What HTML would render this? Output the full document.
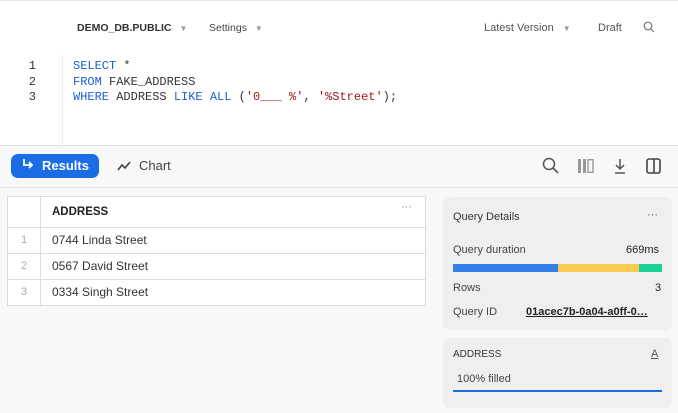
<!DOCTYPE html>
<html><head><style>
*{box-sizing:border-box;margin:0;padding:0}
body{width:678px;height:413px;overflow:hidden;background:#f8f8f8;font-family:"Liberation Sans",sans-serif;color:#1e1e1e;position:relative}
.a{position:absolute}
.top{left:0;top:0;width:678px;height:146px;background:#fff;border-top:1px solid #e8e8e8;border-bottom:1px solid #e2e2e2}
.t{font-size:11px;color:#444}
.code{font-family:"Liberation Mono",monospace;font-size:12px;line-height:15.7px;white-space:pre}
.kw{color:#1a5fd6}.st{color:#a31515}
.ln{color:#333;text-align:right;width:30px;left:6px}
.bar{left:0;top:146px;width:678px;height:42px;background:#f8f8f8;border-bottom:1px solid #e6e6e6}
.btn{left:11px;top:154px;width:88px;height:24px;background:#1a6ce7;border-radius:7px;color:#fff;font-size:13px;font-weight:bold;line-height:24px;padding-left:31px}
.tbl{left:7px;top:196px;width:419px;height:110px;background:#fff;border:1px solid #ddd}
.row{position:absolute;left:0;width:417px;height:26px;border-top:1px solid #ddd;font-size:12px;line-height:25px}
.row .n{position:absolute;left:0;width:32px;text-align:center;color:#aaa;font-size:11px}
.row .v{position:absolute;left:44px;color:#333}
.vl{position:absolute;left:32px;top:0;width:1px;height:108px;background:#ddd}
.card{background:#efefef;border-radius:7px}
.s{font-size:11px;color:#444}
</style></head><body>
<div class="a top"></div>
<div class="a t" style="left:77px;top:22px;font-weight:bold;color:#333;font-size:10.5px">DEMO_DB.PUBLIC <span style="color:#999;font-size:8px;margin-left:5px">▼</span></div>
<div class="a t" style="left:209px;top:22px;font-size:10.5px">Settings <span style="color:#999;font-size:8px;margin-left:5px">▼</span></div>
<div class="a t" style="left:484px;top:22px;color:#555">Latest Version <span style="color:#999;font-size:8px;margin-left:6px">▼</span></div>
<div class="a t" style="left:598px;top:22px;color:#555">Draft</div>
<svg class="a" style="left:643px;top:21px" width="12" height="12"><circle cx="5" cy="5" r="3.8" fill="none" stroke="#777" stroke-width="1.2"/><path d="M8 8l3 3" stroke="#777" stroke-width="1.2"/></svg>
<div class="a" style="left:62px;top:55px;width:1px;height:90px;background:#eee"></div>
<div class="a code ln" style="top:59px">1
2
3</div>
<div class="a code" style="left:73px;top:59px;color:#333"><span class="kw">SELECT</span> *
<span class="kw">FROM</span> FAKE_ADDRESS
<span class="kw">WHERE</span> ADDRESS <span class="kw">LIKE ALL</span> (<span class="st">'0___ %'</span>, <span class="st">'%Street'</span>);</div>
<div class="a bar"></div>
<div class="a btn">Results</div>
<svg class="a" style="left:21px;top:158px" width="14" height="14"><path d="M3 1v6h8M8 4l3 3-3 3" fill="none" stroke="#fff" stroke-width="1.8"/></svg>
<svg class="a" style="left:117px;top:160px" width="14" height="12"><path d="M1 10l4-5 3 3 5-6" fill="none" stroke="#444" stroke-width="1.6"/></svg>
<div class="a" style="left:139px;top:158px;font-size:13px;color:#444">Chart</div>
<svg class="a" style="left:542px;top:157px" width="18" height="18"><circle cx="7" cy="7" r="5.5" fill="none" stroke="#555" stroke-width="1.5"/><path d="M11 11l5 5" stroke="#555" stroke-width="1.6"/></svg>
<svg class="a" style="left:577px;top:157px" width="18" height="18"><rect x="1" y="2" width="3" height="14" fill="#999"/><rect x="6" y="2" width="3" height="14" fill="#999"/><rect x="11" y="2.7" width="5" height="12.6" fill="none" stroke="#999" stroke-width="1.4"/></svg>
<svg class="a" style="left:612px;top:157px" width="16" height="18"><path d="M8 2v10M4 8l4 4 4-4M3 16h10" fill="none" stroke="#555" stroke-width="1.5"/></svg>
<svg class="a" style="left:645px;top:157px" width="18" height="18"><rect x="2" y="2" width="13" height="14" rx="2" fill="none" stroke="#444" stroke-width="1.6"/><path d="M9 2v14" stroke="#444" stroke-width="1.6"/></svg>
<div class="a tbl">
<div class="vl"></div>
<div style="position:absolute;left:44px;top:9px;font-size:11.5px;font-weight:bold;color:#222">ADDRESS</div>
<div style="position:absolute;left:393px;top:4px;font-size:11px;color:#888">···</div>
<div class="row" style="top:30px"><span class="n">1</span><span class="v">0744 Linda Street</span></div>
<div class="row" style="top:56px"><span class="n">2</span><span class="v">0567 David Street</span></div>
<div class="row" style="top:82px"><span class="n">3</span><span class="v">0334 Singh Street</span></div>
</div>
<div class="a card" style="left:443px;top:197px;width:229px;height:133px"></div>
<div class="a s" style="left:453px;top:211px;color:#333">Query Details</div>
<div class="a" style="left:647px;top:209px;font-size:11px;color:#555">···</div>
<div class="a s" style="left:453px;top:244px">Query duration</div>
<div class="a s" style="left:626px;top:244px;color:#222">669ms</div>
<div class="a" style="left:453px;top:264px;width:105px;height:8px;background:#3580e8"></div>
<div class="a" style="left:558px;top:264px;width:81px;height:8px;background:#fccb54"></div>
<div class="a" style="left:639px;top:264px;width:23px;height:8px;background:#17d197"></div>
<div class="a s" style="left:453px;top:282px">Rows</div>
<div class="a s" style="left:655px;top:282px;color:#222">3</div>
<div class="a s" style="left:453px;top:306px">Query ID</div>
<div class="a s" style="left:526px;top:306px;color:#222;font-weight:bold;text-decoration:underline">01acec7b-0a04-a0ff-0…</div>
<div class="a card" style="left:443px;top:338px;width:229px;height:70px"></div>
<div class="a" style="left:453px;top:349px;font-size:10px;color:#333">ADDRESS</div>
<div class="a" style="left:651px;top:348px;font-size:11px;color:#555;text-decoration:underline">A</div>
<div class="a s" style="left:457px;top:373px">100% filled</div>
<div class="a" style="left:453px;top:390px;width:209px;height:2px;background:#1a6ce7"></div>
</body></html>
